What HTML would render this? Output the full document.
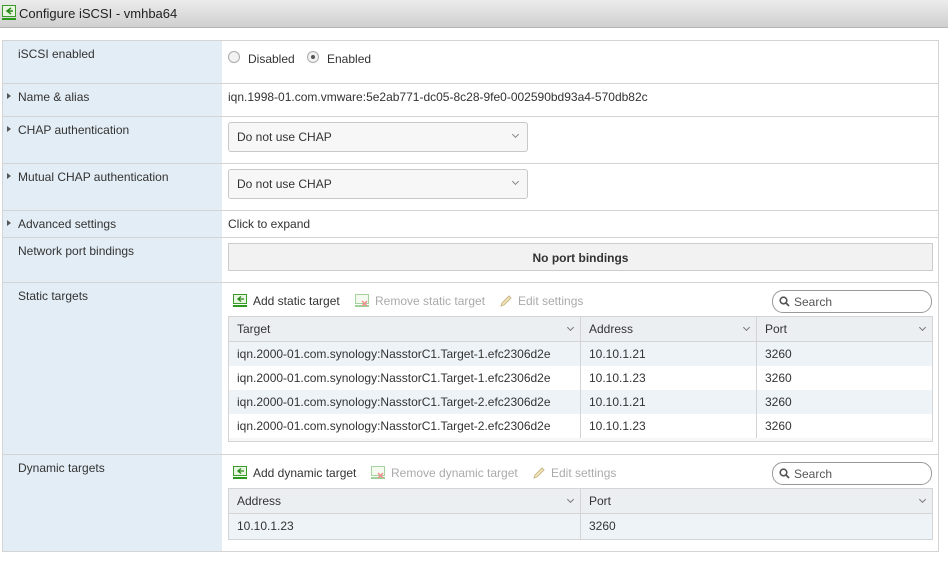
<!DOCTYPE html>
<html><head><meta charset="utf-8"><style>
*{box-sizing:border-box;margin:0;padding:0}
body{width:948px;height:563px;background:#fff;font-family:"Liberation Sans",Arial,sans-serif;font-size:12px;color:#333;position:relative;overflow:hidden}
.a{position:absolute}
.title{left:0;top:0;width:948px;height:28px;background:linear-gradient(#ececec,#cfcfcf);border-bottom:1px solid #b5b5b5;font-size:13px;color:#222}
.box{left:2px;top:40px;width:937px;height:512px;border:1px solid #d4d4d4}
.left{left:3px;top:41px;width:219px;height:510px;background:#e3edf5}
.hl{left:3px;width:935px;height:1px;background:#d4d4d4}
.lbl{left:18px}
.arr{left:7px;width:0;height:0;border-left:4px solid #555;border-top:3.5px solid transparent;border-bottom:3.5px solid transparent}
.sel{left:228px;width:300px;height:30px;border:1px solid #c8c8c8;border-radius:3px;background:#f7f7f7;padding:7px 8px}
.chev{position:absolute;width:5px;height:5px;border-right:1px solid #888;border-bottom:1px solid #888;transform:rotate(45deg)}
.search{width:160px;height:23px;border:1px solid #999;border-radius:11px;padding:4px 0 0 21px;color:#555}
.tbl{left:228px;width:705px;border:1px solid #d4d4d4;background:#f7f7f7}
.th{position:absolute;height:25px;background:#eceff2;border-bottom:1px solid #d4d4d4;padding:6px 8px}
.td{position:absolute;height:24px;padding:5px 8px}
.vl{position:absolute;width:1px;background:#d4d4d4}
.ico{display:inline-block;width:15px;height:13px;vertical-align:-2px;margin-right:5px}
.dis{color:#aaa}
.pen{display:inline-block;width:14px;height:14px;vertical-align:-3px;margin-right:5px}
</style></head><body>
<div class="a title"><svg class="a" style="left:2px;top:5px" width="15" height="16" viewBox="0 0 15 16"><rect x="0.5" y="0.5" width="13" height="11" fill="#e8f5e0" stroke="#3a9a2a"/><path d="M9 3 L5 6 L9 9 M5 6 H11" stroke="#2a8a1a" stroke-width="1.5" fill="none"/><rect x="0" y="13" width="14" height="2" fill="#2a9a1a"/></svg><span class="a" style="left:19px;top:6px">Configure iSCSI - vmhba64</span></div>
<div class="a box"></div><div class="a left"></div>
<div class="a hl" style="top:83px"></div><div class="a hl" style="top:116px"></div><div class="a hl" style="top:163px"></div><div class="a hl" style="top:210px"></div><div class="a hl" style="top:237px"></div><div class="a hl" style="top:282px"></div><div class="a hl" style="top:454px"></div>

<span class="a lbl" style="top:47px">iSCSI enabled</span>
<span class="a" style="left:228px;top:51px;width:12px;height:12px;border:1px solid #aaa;border-radius:50%;background:#f2f2f2"></span><span class="a" style="left:248px;top:52px">Disabled</span>
<span class="a" style="left:307px;top:51px;width:12px;height:12px;border:1px solid #aaa;border-radius:50%;background:#f2f2f2"><span class="a" style="left:3px;top:3px;width:4px;height:4px;border-radius:50%;background:#555"></span></span><span class="a" style="left:327px;top:52px">Enabled</span>

<span class="a arr" style="top:93px"></span><span class="a lbl" style="top:90px">Name &amp; alias</span>
<span class="a" style="left:228px;top:90px">iqn.1998-01.com.vmware:5e2ab771-dc05-8c28-9fe0-002590bd93a4-570db82c</span>

<span class="a arr" style="top:126px"></span><span class="a lbl" style="top:123px">CHAP authentication</span>
<div class="a sel" style="top:122px">Do not use CHAP<span class="chev" style="left:284px;top:9px"></span></div>
<span class="a arr" style="top:173px"></span><span class="a lbl" style="top:170px">Mutual CHAP authentication</span>
<div class="a sel" style="top:169px">Do not use CHAP<span class="chev" style="left:284px;top:9px"></span></div>

<span class="a arr" style="top:220px"></span><span class="a lbl" style="top:217px">Advanced settings</span>
<span class="a" style="left:228px;top:217px">Click to expand</span>

<span class="a lbl" style="top:244px">Network port bindings</span>
<div class="a" style="left:228px;top:243px;width:705px;height:28px;border:1px solid #ccc;background:#f2f2f2;text-align:center;padding-top:7px;font-weight:bold">No port bindings</div>

<span class="a lbl" style="top:289px">Static targets</span>
<div class="a" style="left:233px;top:294px"><svg class="ico" viewBox="0 0 15 13"><rect x="0.5" y="0.5" width="13" height="9" fill="#e8f5e0" stroke="#3a9a2a"/><path d="M8 2.5 L5 5 L8 7.5 M5 5 H11" stroke="#2a8a1a" stroke-width="1.3" fill="none"/><rect x="0" y="11" width="14" height="2" fill="#2a9a1a"/></svg>Add static target</div>
<div class="a dis" style="left:355px;top:294px"><svg class="ico" viewBox="0 0 15 13" opacity=".45"><rect x="0.5" y="0.5" width="13" height="9" fill="#e8f5e0" stroke="#3a9a2a"/><rect x="0" y="11" width="14" height="2" fill="#2a9a1a"/><path d="M7 7 L12 12 M12 7 L7 12" stroke="#d00" stroke-width="1.4"/></svg>Remove static target</div>
<div class="a dis" style="left:499px;top:294px"><svg class="pen" viewBox="0 0 14 14"><path d="M2 12 L3 9 L10 2 L12 4 L5 11 Z" fill="#f3e6b8" stroke="#c9b98a"/></svg>Edit settings</div>
<div class="a search" style="left:772px;top:290px">Search</div>
<svg class="a" style="left:779px;top:296px" width="11" height="11"><circle cx="4.5" cy="4.5" r="3.3" stroke="#555" stroke-width="1.6" fill="none"/><path d="M7 7 L10 10" stroke="#555" stroke-width="1.8"/></svg>
<div class="a tbl" style="top:316px;height:126px">
 <div class="th" style="left:0;width:703px"></div>
 <span class="td" style="left:0;top:0">Target</span><span class="td" style="left:352px;top:0">Address</span><span class="td" style="left:528px;top:0">Port</span>
 <span class="chev" style="left:339px;top:8px;border-color:#777"></span><span class="chev" style="left:515px;top:8px;border-color:#777"></span><span class="chev" style="left:691px;top:8px;border-color:#777"></span>
 <div class="a" style="left:0;top:25px;width:703px;height:24px;background:#eef3f8"></div>
 <div class="a" style="left:0;top:49px;width:703px;height:24px;background:#fff"></div>
 <div class="a" style="left:0;top:73px;width:703px;height:24px;background:#eef3f8"></div>
 <div class="a" style="left:0;top:97px;width:703px;height:24px;background:#fff"></div>
 <div class="vl" style="left:351px;top:0;height:121px"></div><div class="vl" style="left:527px;top:0;height:121px"></div>
 <span class="td" style="left:0;top:25px">iqn.2000-01.com.synology:NasstorC1.Target-1.efc2306d2e</span><span class="td" style="left:352px;top:25px">10.10.1.21</span><span class="td" style="left:528px;top:25px">3260</span>
 <span class="td" style="left:0;top:49px">iqn.2000-01.com.synology:NasstorC1.Target-1.efc2306d2e</span><span class="td" style="left:352px;top:49px">10.10.1.23</span><span class="td" style="left:528px;top:49px">3260</span>
 <span class="td" style="left:0;top:73px">iqn.2000-01.com.synology:NasstorC1.Target-2.efc2306d2e</span><span class="td" style="left:352px;top:73px">10.10.1.21</span><span class="td" style="left:528px;top:73px">3260</span>
 <span class="td" style="left:0;top:97px">iqn.2000-01.com.synology:NasstorC1.Target-2.efc2306d2e</span><span class="td" style="left:352px;top:97px">10.10.1.23</span><span class="td" style="left:528px;top:97px">3260</span>
</div>

<span class="a lbl" style="top:461px">Dynamic targets</span>
<div class="a" style="left:233px;top:466px"><svg class="ico" viewBox="0 0 15 13"><rect x="0.5" y="0.5" width="13" height="9" fill="#e8f5e0" stroke="#3a9a2a"/><path d="M8 2.5 L5 5 L8 7.5 M5 5 H11" stroke="#2a8a1a" stroke-width="1.3" fill="none"/><rect x="0" y="11" width="14" height="2" fill="#2a9a1a"/></svg>Add dynamic target</div>
<div class="a dis" style="left:371px;top:466px"><svg class="ico" viewBox="0 0 15 13" opacity=".45"><rect x="0.5" y="0.5" width="13" height="9" fill="#e8f5e0" stroke="#3a9a2a"/><rect x="0" y="11" width="14" height="2" fill="#2a9a1a"/><path d="M7 7 L12 12 M12 7 L7 12" stroke="#d00" stroke-width="1.4"/></svg>Remove dynamic target</div>
<div class="a dis" style="left:532px;top:466px"><svg class="pen" viewBox="0 0 14 14"><path d="M2 12 L3 9 L10 2 L12 4 L5 11 Z" fill="#f3e6b8" stroke="#c9b98a"/></svg>Edit settings</div>
<div class="a search" style="left:772px;top:462px">Search</div>
<svg class="a" style="left:779px;top:468px" width="11" height="11"><circle cx="4.5" cy="4.5" r="3.3" stroke="#555" stroke-width="1.6" fill="none"/><path d="M7 7 L10 10" stroke="#555" stroke-width="1.8"/></svg>
<div class="a tbl" style="top:488px;height:52px">
 <div class="th" style="left:0;width:703px"></div>
 <span class="td" style="left:0;top:0">Address</span><span class="td" style="left:352px;top:0">Port</span>
 <span class="chev" style="left:339px;top:8px;border-color:#777"></span><span class="chev" style="left:691px;top:8px;border-color:#777"></span>
 <div class="a" style="left:0;top:25px;width:703px;height:25px;background:#eef3f8"></div>
 <div class="vl" style="left:351px;top:0;height:50px"></div>
 <span class="td" style="left:0;top:25px">10.10.1.23</span><span class="td" style="left:352px;top:25px">3260</span>
</div>
</body></html>
